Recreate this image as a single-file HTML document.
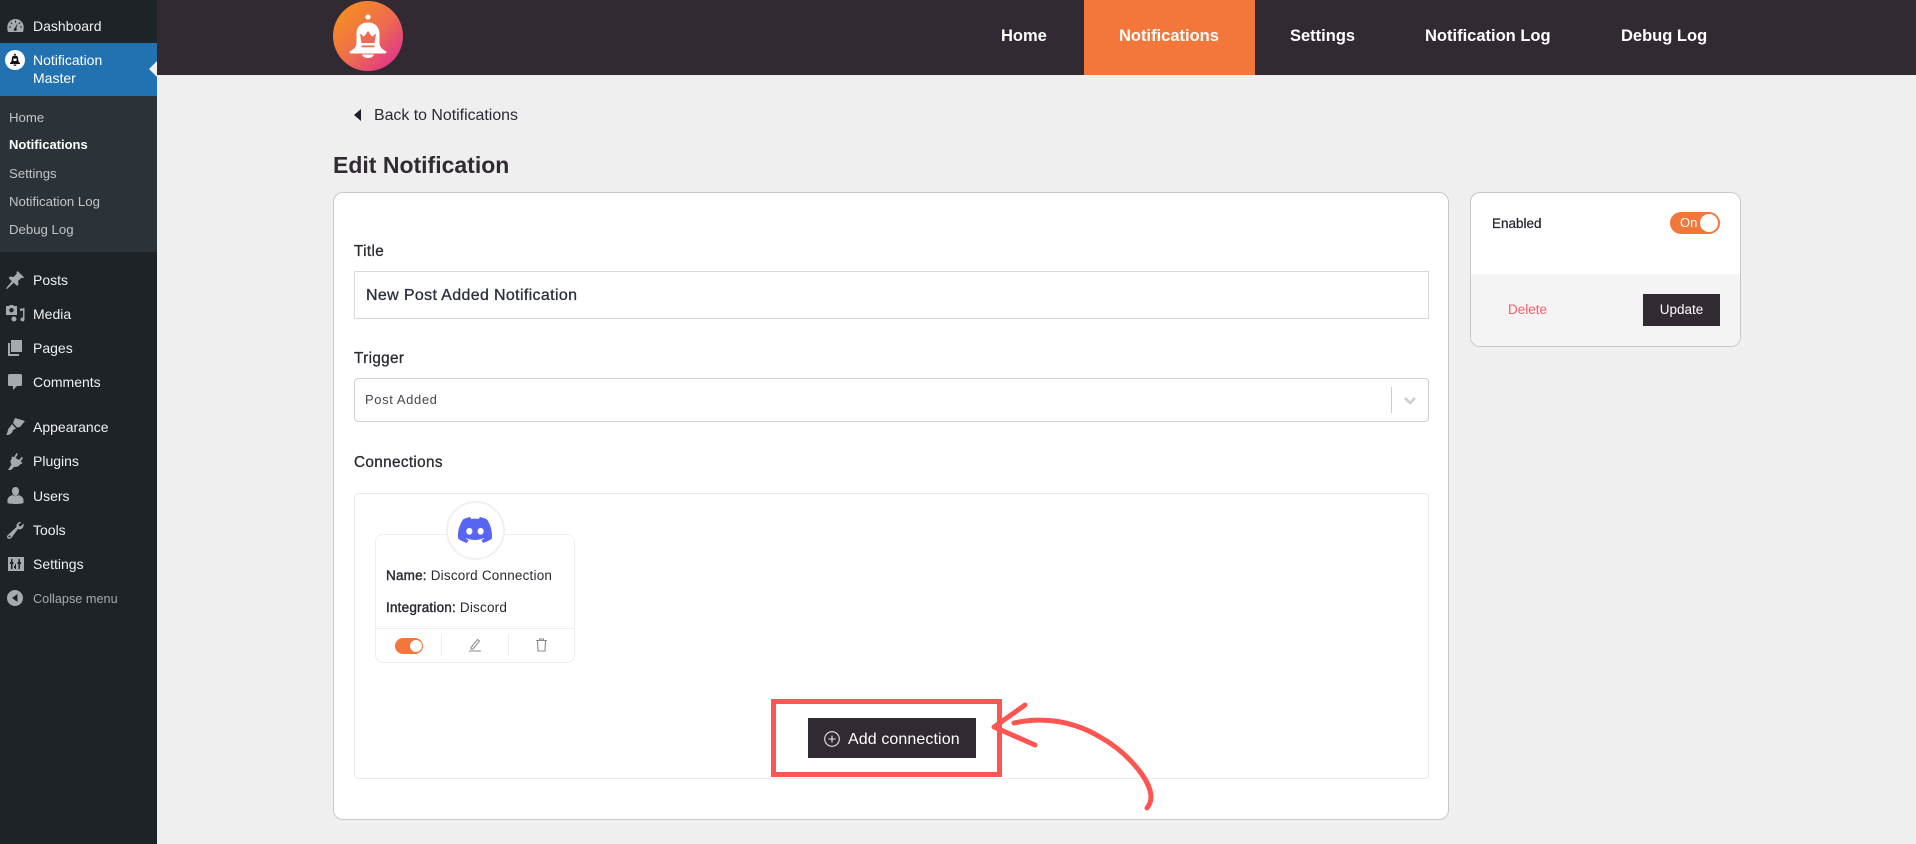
<!DOCTYPE html>
<html><head><meta charset="utf-8"><title>Edit Notification</title>
<style>
*{box-sizing:border-box;margin:0;padding:0}
html,body{width:1916px;height:844px;overflow:hidden;background:#efefef;font-family:"Liberation Sans",sans-serif;position:relative}
.a{position:absolute}
.t{position:absolute;white-space:nowrap;height:20px;line-height:20px}
.s{color:#f0f0f1;font-size:14px}
.sub{color:#c3c4c7;font-size:13.2px;left:9px}
.n{color:#fff;font-size:16.5px;font-weight:bold;top:26px;letter-spacing:0}
.l{color:#2a2a33;font-size:15.3px;left:354px;letter-spacing:.35px;-webkit-text-stroke:.3px #2a2a33}
svg{position:absolute;overflow:visible}
.i{fill:#a7aaad}
</style></head><body>
<div class="a" style="left:0;top:0;width:157px;height:844px;background:#1d2327"></div>
<div class="a" style="left:0;top:43px;width:157px;height:53px;background:#2271b1"></div>
<div class="a" style="left:0;top:96px;width:157px;height:156px;background:#2c3338"></div>
<svg style="left:149px;top:61px" width="8" height="16"><path d="M8 0L0 8l8 8z" fill="#f0f0f1"/></svg>

<svg style="left:7px;top:19px" width="17" height="13" viewBox="0 0 17 13"><path class="i" d="M8.500 0A8.200 8.200 0 0 0 .3 8.500c0 1.700.3 3 .7 4.500h15c.4-1.500.7-2.800.7-4.500A8.200 8.200 0 0 0 8.500 0z"/><path d="M8.500 1.500v2M3.800 3.500l1.300 1.300M13.200 3.500l-1.300 1.300M2 8h2M13 8h2" stroke="#1d2327" stroke-width="1"/><path d="M10.800 4L9.300 9.300a1.500 1.500 0 1 1-1.500-.3z" fill="#1d2327"/></svg>
<div class="t s" style="left:33px;top:16px">Dashboard</div>

<svg style="left:5px;top:50px" width="20" height="20" viewBox="0 0 20 20"><circle cx="10" cy="10" r="10" fill="#fff"/><circle cx="10" cy="4.500" r=".9" fill="#111"/><path d="M10 5.500c2.300 0 3.200 1.600 3.200 3.500 0 2 .5 3 1.800 4v1H5v-1c1.300-1 1.800-2 1.800-4 0-1.900.9-3.500 3.200-3.500zM8.500 14.500h3a1.500 1.300 0 0 1-3 0z" fill="#111"/><path d="M8.200 8.300l1 .8.800-1.300.8 1.300 1-.8-.4 2.700H8.600z" fill="#fff"/></svg>
<div class="t s" style="left:33px;top:50px;color:#fff">Notification</div>
<div class="t s" style="left:33px;top:68px;color:#fff">Master</div>

<div class="t sub" style="top:108px">Home</div>
<div class="t sub" style="top:135px;color:#fff;font-weight:bold;font-size:13px">Notifications</div>
<div class="t sub" style="top:164px">Settings</div>
<div class="t sub" style="top:192px">Notification Log</div>
<div class="t sub" style="top:220px">Debug Log</div>

<svg style="left:6px;top:271px" width="19" height="19" viewBox="0 0 19 19"><path class="i" d="M11.500 0l6.500 6.200-1.300 1-1.200-.4-3.500 3.200.5 3.500-1.500 1.500-3.200-3.200L1 18l-1-.6 5.800-7.200L2.600 7l1.500-1.500 3.500.5 3.200-3.400-.4-1.300z"/></svg>
<div class="t s" style="left:33px;top:270px">Posts</div>
<svg style="left:6px;top:305px" width="19" height="18" viewBox="0 0 19 18"><path class="i" fill-rule="evenodd" d="M0 1h3l1-1h3l1 1h3v9H0zm5.500 2a2.200 2.200 0 1 0 0 4.400 2.200 2.200 0 0 0 0-4.400zM13 4l5.500-1v11.500a2 2 0 1 1-1.500-2V5.500L14 6V3.500zM8 11.500a2.500 2.500 0 1 1-2.200 3.800 2.500 2.500 0 0 1 2.200-3.800z"/></svg>
<div class="t s" style="left:33px;top:304px">Media</div>
<svg style="left:8px;top:340px" width="14" height="16" viewBox="0 0 14 16"><path class="i" d="M3 0h11v12H3zM0 3h2v11h9v2H0z"/></svg>
<div class="t s" style="left:33px;top:338px">Pages</div>
<svg style="left:8px;top:374px" width="14" height="16" viewBox="0 0 14 16"><path class="i" d="M1.500 0h11A1.500 1.500 0 0 1 14 1.500v9a1.500 1.500 0 0 1-1.500 1.500H9l-4 4v-4H1.500A1.500 1.500 0 0 1 0 10.500v-9A1.500 1.500 0 0 1 1.500 0z"/></svg>
<div class="t s" style="left:33px;top:372px">Comments</div>
<svg style="left:6px;top:418px" width="19" height="18" viewBox="0 0 19 18"><path class="i" d="M9 0l10 3-5 6-3 .5L7 5zM6 6l4 4.500-3 1.500c-.5 3-3 5-6 5H0c1-1 1.500-3 2-5 .3-1.500 1-2.200 2-3z"/></svg>
<div class="t s" style="left:33px;top:417px">Appearance</div>
<svg style="left:7px;top:453px" width="17" height="17" viewBox="0 0 17 17"><path class="i" d="M9.500 0l1.500 1-2.500 4 3.500 2 2.800-3.300L16 5l-2.500 3.500 2 1.200-1 1.500-1.200-.5c-1 2.500-3 3.500-6 3L4 17H1l3.500-5.500C3 9.500 3 7.500 5 5.500l-.7-1 1.400-1 1.300.8z"/></svg>
<div class="t s" style="left:33px;top:451px">Plugins</div>
<svg style="left:7px;top:487px" width="17" height="17" viewBox="0 0 17 17"><path class="i" d="M8.500 0c2.200 0 3.500 1.700 3.500 4s-1.300 5-3.500 5S5 6.300 5 4s1.300-4 3.500-4zM5.500 8c1 1.500 5 1.500 6 0 3 1 5 2.500 5 5.500V16c-3 1.300-13 1.300-16 0v-2.500C.5 10.500 2.500 9 5.500 8z"/></svg>
<div class="t s" style="left:33px;top:486px">Users</div>
<svg style="left:7px;top:522px" width="17" height="17" viewBox="0 0 17 17"><path class="i" fill-rule="evenodd" d="M16.500 1.500l-3 3-1.500-.5-.5-1.500L14.500 0c-2.500-.7-5.500 1.500-5 5L.8 13c-1.300 1.500-.8 3 .2 3.500 1 .7 2.500.5 3.500-.8L11 7c3.500 1.500 6.500-2 5.500-5.500zM2.500 13.500a1 1 0 1 1 0 2 1 1 0 0 1 0-2z"/></svg>
<div class="t s" style="left:33px;top:520px">Tools</div>
<svg style="left:8px;top:557px" width="16" height="14" viewBox="0 0 16 14"><path class="i" fill-rule="evenodd" d="M0 0h16v14H0zm3 2v3H2v2h1v5h1.500V7h1V5h-1V2zm7.500 0v3h-1v2h1v5H12V7h1V5h-1V2zM7 7v2H6v2h1v1h1V7z"/></svg>
<div class="t s" style="left:33px;top:554px">Settings</div>
<svg style="left:7px;top:590px" width="16" height="16" viewBox="0 0 16 16"><path class="i" fill-rule="evenodd" d="M8 0a8 8 0 1 1 0 16A8 8 0 0 1 8 0zm2.500 4L5 8l5.500 4z"/></svg>
<div class="t s" style="left:33px;top:589px;color:#a7aaad;font-size:12.7px">Collapse menu</div>

<div class="a" style="left:157px;top:0;width:1759px;height:75px;background:#322a32"></div>
<div class="a" style="left:1084px;top:0;width:171px;height:75px;background:#f3773b"></div>
<svg style="left:333px;top:1px" width="70" height="70" viewBox="0 0 70 70"><defs><linearGradient id="g" x1="0.1" y1="0.1" x2="0.9" y2="0.9"><stop offset="0" stop-color="#f68f1f"/><stop offset=".55" stop-color="#ee6a50"/><stop offset="1" stop-color="#e0348a"/></linearGradient></defs><circle cx="35" cy="35" r="35" fill="url(#g)"/><circle cx="35" cy="16" r="2.600" fill="#fff"/><path d="M35 21.500C43 21.500 46.500 27 46.500 33V41C46.500 46 49 48 52.500 50C54 51 53.500 52.500 52 52.500H18C16.500 52.500 16 51 17.500 50C21 48 23.500 46 23.500 41V33C23.500 27 27 21.500 35 21.500zM29 53.500h12c-1 2.500-3.500 3.500-6 3.500s-5-1-6-3.500z" fill="#fff"/><path d="M27 32.500l4 3.300L35 30l4 5.800 4-3.300-1.500 9.500h-13zM28.500 44.500h13v1.800h-13z" fill="#ee6a50"/></svg>
<div class="t n" style="left:1001px">Home</div>
<div class="t n" style="left:1119px">Notifications</div>
<div class="t n" style="left:1290px">Settings</div>
<div class="t n" style="left:1425px">Notification Log</div>
<div class="t n" style="left:1621px">Debug Log</div>

<svg style="left:354px;top:109px" width="7" height="12"><path d="M7 0L0 6l7 6z" fill="#1f1f28"/></svg>
<div class="t" style="left:374px;top:106px;font-size:15.9px;color:#2a2a33">Back to Notifications</div>
<div class="t" style="left:333px;top:155px;font-size:23px;font-weight:bold;color:#322a32">Edit Notification</div>

<div class="a" style="left:333px;top:192px;width:1116px;height:628px;background:#fff;border:1px solid #c8c8c8;border-radius:10px"></div>
<div class="t l" style="top:242px">Title</div>
<div class="a" style="left:354px;top:271px;width:1075px;height:48px;border:1px solid #d8d8d8"></div>
<div class="t" style="left:366px;top:286px;font-size:16px;color:#2a3040;letter-spacing:.35px;-webkit-text-stroke:.3px #2a3040">New Post Added Notification</div>
<div class="t l" style="top:349px">Trigger</div>
<div class="a" style="left:354px;top:378px;width:1075px;height:44px;border:1px solid #d0d0d0;border-radius:4px"></div>
<div class="t" style="left:365px;top:390px;font-size:13px;color:#4a4450;letter-spacing:.6px">Post Added</div>
<div class="a" style="left:1391px;top:387px;width:1px;height:26px;background:#ccc"></div>
<svg style="left:1404px;top:397px" width="12" height="8"><path d="M1 1l5 5 5-5" fill="none" stroke="#ccc" stroke-width="2.500"/></svg>
<div class="t l" style="top:453px">Connections</div>

<div class="a" style="left:354px;top:493px;width:1075px;height:286px;border:1px solid #eaeaea;border-radius:4px"></div>
<div class="a" style="left:375px;top:534px;width:200px;height:129px;border:1px solid #eee;border-radius:8px;background:#fff"></div>
<div class="a" style="left:446px;top:501px;width:59px;height:59px;border:2px solid #f0f0f0;border-radius:50%;background:#fff"></div>
<svg style="left:458px;top:513px" width="34" height="34" viewBox="0 0 24 24"><path fill="#5865f2" d="M20.317 4.3698a19.7913 19.7913 0 00-4.8851-1.5152.0741.0741 0 00-.0785.0371c-.211.3753-.4447.8648-.6083 1.2495-1.8447-.2762-3.68-.2762-5.4868 0-.1636-.3933-.4058-.8742-.6177-1.2495a.077.077 0 00-.0785-.037 19.7363 19.7363 0 00-4.8852 1.515.0699.0699 0 00-.0321.0277C.5334 9.0458-.319 13.5799.0992 18.0578a.0824.0824 0 00.0312.0561c2.0528 1.5076 4.0413 2.4228 5.9929 3.0294a.0777.0777 0 00.0842-.0276c.4616-.6304.8731-1.2952 1.226-1.9942a.076.076 0 00-.0416-.1057c-.6528-.2476-1.2743-.5495-1.8722-.8923a.077.077 0 01-.0076-.1277c.1258-.0943.2517-.1923.3718-.2914a.0743.0743 0 01.0776-.0105c3.9278 1.7933 8.18 1.7933 12.0614 0a.0739.0739 0 01.0785.0095c.1202.099.246.1981.3728.2924a.077.077 0 01-.0066.1276 12.2986 12.2986 0 01-1.873.8914.0766.0766 0 00-.0407.1067c.3604.698.7719 1.3628 1.225 1.9932a.076.076 0 00.0842.0286c1.961-.6067 3.9495-1.5219 6.0023-3.0294a.077.077 0 00.0313-.0552c.5004-5.177-.8382-9.6739-3.5485-13.6604a.061.061 0 00-.0312-.0286zM8.02 15.3312c-1.1825 0-2.1569-1.0857-2.1569-2.419 0-1.3332.9555-2.4189 2.157-2.4189 1.2108 0 2.1757 1.0952 2.1568 2.419 0 1.3332-.9555 2.4189-2.1569 2.4189zm7.9748 0c-1.1825 0-2.1569-1.0857-2.1569-2.419 0-1.3332.9554-2.4189 2.1569-2.4189 1.2108 0 2.1757 1.0952 2.1568 2.419 0 1.3332-.946 2.4189-2.1568 2.4189Z"/></svg>
<div class="t" style="left:386px;top:566px;font-size:13.500px;color:#2a2a33;letter-spacing:.2px"><span style="-webkit-text-stroke:.4px #2a2a33">Name:</span> Discord Connection</div>
<div class="t" style="left:386px;top:598px;font-size:13.500px;color:#2a2a33;letter-spacing:.2px"><span style="-webkit-text-stroke:.4px #2a2a33">Integration:</span> Discord</div>
<div class="a" style="left:376px;top:628px;width:198px;height:1px;background:#eee"></div>
<div class="a" style="left:395px;top:638px;width:28px;height:16px;border-radius:8px;background:#f3773b"></div>
<div class="a" style="left:410px;top:640px;width:12px;height:12px;border-radius:50%;background:#fff"></div>
<div class="a" style="left:441px;top:634px;width:1px;height:23px;background:#eee"></div>
<div class="a" style="left:508px;top:634px;width:1px;height:23px;background:#eee"></div>
<svg style="left:468px;top:638px" width="14" height="14" viewBox="0 0 14 14"><path d="M3 9.500L9.500 1.500l2 1.700L5 11H3zM1 13h12" fill="none" stroke="#8a8a8a" stroke-width="1"/></svg>
<svg style="left:535px;top:638px" width="13" height="14" viewBox="0 0 13 14"><path d="M1 2.500h11M4.500 2.500V1h4v1.500M2.500 2.500l.5 10.500h7l.5-10.500" fill="none" stroke="#8a8a8a" stroke-width="1.100"/></svg>

<div class="a" style="left:808px;top:718px;width:168px;height:40px;background:#322a32"></div>
<svg style="left:824px;top:731px" width="16" height="16" viewBox="0 0 16 16"><circle cx="8" cy="8" r="7.300" fill="none" stroke="#e8e8e8" stroke-width="1.100"/><path d="M8 4.500v7M4.500 8h7" stroke="#e8e8e8" stroke-width="1.100"/></svg>
<div class="t" style="left:848px;top:730px;font-size:16px;color:#fff;letter-spacing:.1px">Add connection</div>
<div class="a" style="left:771px;top:699px;width:231px;height:78px;border:5px solid #fc5552"></div>
<svg style="left:0;top:0" width="1916" height="844"><path d="M1025 705L994 727l41 18M1014 723C1045 716 1075 722 1100 737C1127 752 1151 780 1151 797Q1151 803 1147 808" fill="none" stroke="#fc5552" stroke-width="5" stroke-linecap="round" stroke-linejoin="round"/></svg>

<div class="a" style="left:1470px;top:192px;width:271px;height:155px;background:#fff;border:1px solid #c8c8c8;border-radius:10px;overflow:hidden"><div class="a" style="left:0;top:81px;width:271px;height:74px;background:#f4f4f4"></div></div>
<div class="t" style="left:1492px;top:214px;font-size:13.500px;color:#22222c;-webkit-text-stroke:.2px #22222c">Enabled</div>
<div class="a" style="left:1670px;top:212px;width:50px;height:22px;border-radius:11px;background:#f3773b"></div>
<div class="a" style="left:1700px;top:214px;width:18px;height:18px;border-radius:50%;background:#fff"></div>
<div class="t" style="left:1680px;top:213px;font-size:13px;color:#fff">On</div>
<div class="t" style="left:1508px;top:300px;font-size:13.500px;color:#ff5a66">Delete</div>
<div class="a" style="left:1643px;top:294px;width:77px;height:32px;background:#322a32"></div>
<div class="t" style="left:1643px;width:77px;text-align:center;top:300px;font-size:13.500px;color:#fff">Update</div>
</body></html>
